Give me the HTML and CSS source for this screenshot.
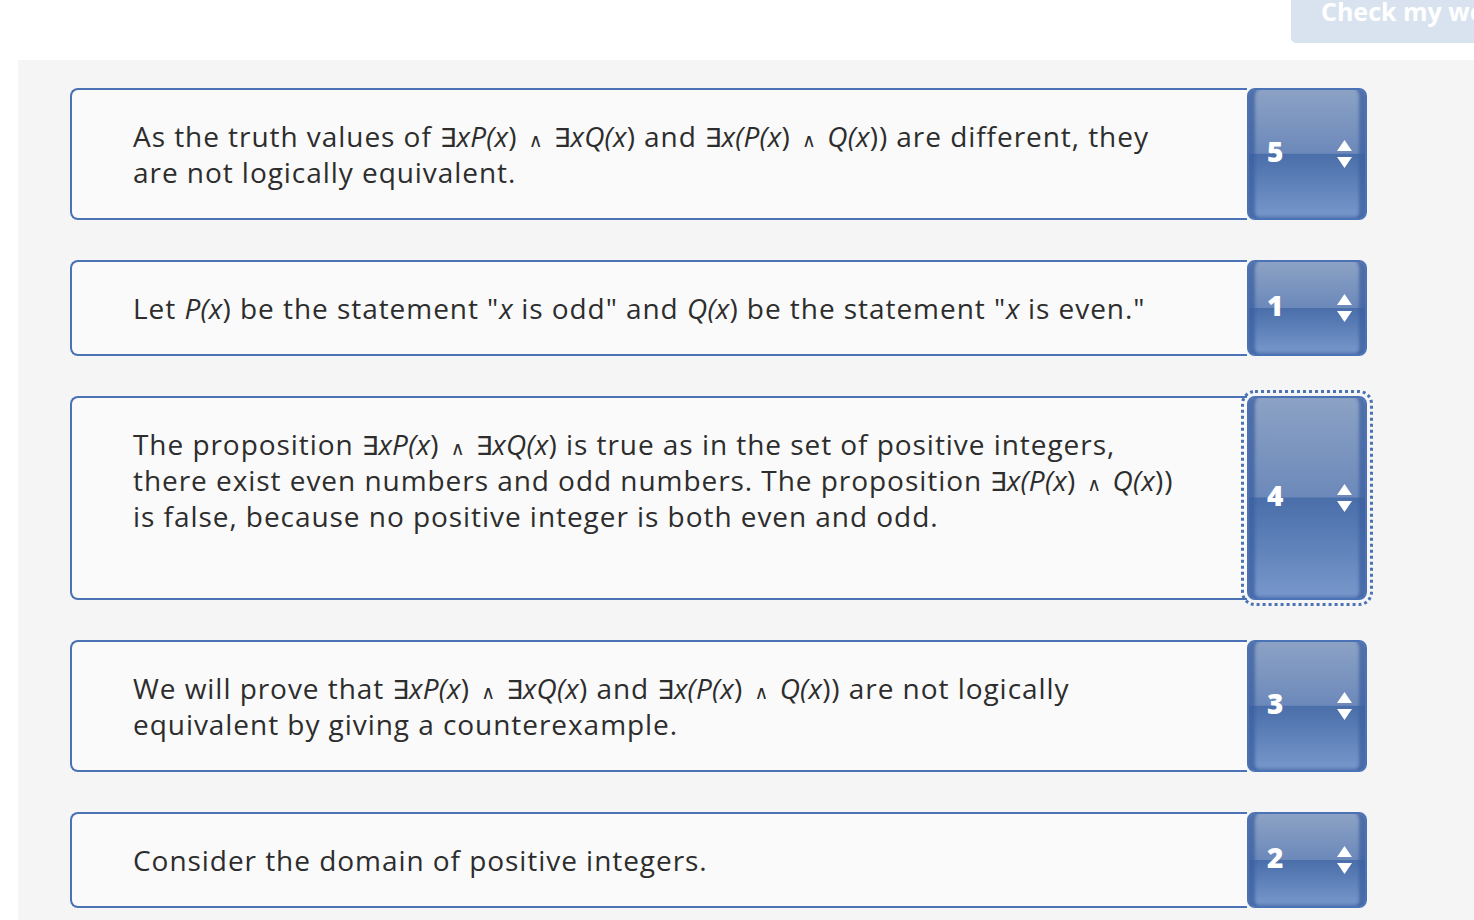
FILE: index.html
```html
<!DOCTYPE html>
<html lang="en">
<head>
    <meta charset="UTF-8">
    <meta name="viewport" content="width=device-width, initial-scale=1.0">
    <title>Ordering</title>
    <link rel="stylesheet" href="styles.css">
</head>
<body>
    <!-- Top bar -->
    <header class="topbar">
        <button class="check-button">Check my work</button>
    </header>

    <main class="panel">
        <div class="card">
            <div class="card-text">
                As the truth values of <span class="q">∃</span><i>xP(x</i>) <span class="op">∧</span> <span class="q">∃</span><i>xQ(x</i>) and <span class="q">∃</span><i>x(P(x</i>) <span class="op">∧</span> <i>Q(x</i>)) are different, they<br>are not logically equivalent.
            </div>
            <div class="order-select"><span class="order-num">5</span><svg class="arrows" width="15" height="28" viewBox="0 0 15 28"><polygon points="7.5,0 15,11 0,11"/><polygon points="0,17 15,17 7.5,28"/></svg></div>
        </div>

        <div class="card">
            <div class="card-text">
                Let <i>P(x</i>) be the statement "<i>x</i> is odd" and <i>Q(x</i>) be the statement "<i>x</i> is even."
            </div>
            <div class="order-select"><span class="order-num">1</span><svg class="arrows" width="15" height="28" viewBox="0 0 15 28"><polygon points="7.5,0 15,11 0,11"/><polygon points="0,17 15,17 7.5,28"/></svg></div>
        </div>

        <div class="card">
            <div class="card-text card-text-tall">
                The proposition <span class="q">∃</span><i>xP(x</i>) <span class="op">∧</span> <span class="q">∃</span><i>xQ(x</i>) is true as in the set of positive integers,<br>there exist even numbers and odd numbers. The proposition <span class="q">∃</span><i>x(P(x</i>) <span class="op">∧</span> <i>Q(x</i>))<br>is false, because no positive integer is both even and odd.
            </div>
            <div class="order-select focused"><span class="order-num">4</span><svg class="arrows" width="15" height="28" viewBox="0 0 15 28"><polygon points="7.5,0 15,11 0,11"/><polygon points="0,17 15,17 7.5,28"/></svg></div>
        </div>

        <div class="card">
            <div class="card-text">
                We will prove that <span class="q">∃</span><i>xP(x</i>) <span class="op">∧</span> <span class="q">∃</span><i>xQ(x</i>) and <span class="q">∃</span><i>x(P(x</i>) <span class="op">∧</span> <i>Q(x</i>)) are not logically<br>equivalent by giving a counterexample.
            </div>
            <div class="order-select"><span class="order-num">3</span><svg class="arrows" width="15" height="28" viewBox="0 0 15 28"><polygon points="7.5,0 15,11 0,11"/><polygon points="0,17 15,17 7.5,28"/></svg></div>
        </div>

        <div class="card">
            <div class="card-text">
                Consider the domain of positive integers.
            </div>
            <div class="order-select"><span class="order-num">2</span><svg class="arrows" width="15" height="28" viewBox="0 0 15 28"><polygon points="7.5,0 15,11 0,11"/><polygon points="0,17 15,17 7.5,28"/></svg></div>
        </div>
    </main>
</body>
</html>
```

FILE: styles.css
```css
/* Page */
body {
    margin: 0;
    overflow: hidden;
    background-color: #fff;
    font-family: 'Open Sans', 'Liberation Sans', 'DejaVu Sans', sans-serif;
    color: #2d2d2d;
}

/* Top bar */
.topbar {
    height: 60px;
    display: flex;
    justify-content: flex-end;
    align-items: flex-start;
    overflow: hidden;
}

.check-button {
    width: 260px;
    margin-top: -12px;
    margin-right: -77px;
    padding: 5px 30px 14px;
    text-align: left;
    background-color: #d9e3ef;
    color: #fff;
    border: none;
    border-radius: 5px;
    font-family: 'Open Sans', 'Liberation Sans', sans-serif;
    font-size: 25px;
    font-weight: 700;
    line-height: 36px;
    white-space: nowrap;
}

/* Grey panel */
.panel {
    margin-left: 18px;
    min-height: 900px;
    padding: 28px 107px 0 52px;
    background-color: #f5f5f5;
    display: flex;
    flex-direction: column;
    gap: 40px;
}

/* Cards */
.card {
    display: flex;
}

.card-text {
    flex: 1;
    padding: 28px 20px 28px 61px;
    background-color: #fafafa;
    border: 2px solid #4a72b5;
    border-right: none;
    border-radius: 8px 0 0 8px;
    font-size: 28px;
    line-height: 36px;
    letter-spacing: 0.95px;
    white-space: nowrap;
}

.card-text-tall {
    padding-bottom: 64px;
}

.card-text i {
    font-style: italic;
    letter-spacing: 0.3px;
}

.q {
    font-family: 'DejaVu Sans', sans-serif;
    font-size: 26px;
    line-height: 20px;
    letter-spacing: 0;
}

.op {
    font-family: 'DejaVu Sans', sans-serif;
    font-size: 19px;
    line-height: 20px;
    letter-spacing: 0;
    padding: 0 3px;
}

/* Number selector */
.order-select {
    width: 120px;
    flex-shrink: 0;
    box-sizing: border-box;
    display: flex;
    align-items: center;
    justify-content: space-between;
    padding: 0 13px 0 18px;
    border: 2px solid #4a72b5;
    border-radius: 8px;
    background: linear-gradient(to bottom, #8ca2c5 0%, #6c89ba 49.5%, #4a6ea9 50%, #5d80b9 72%, #7898cb 100%);
    box-shadow: inset 10px 0 3px -4px rgba(60, 95, 160, 0.75),
                inset -10px 0 3px -4px rgba(60, 95, 160, 0.75),
                inset 0 -5px 3px -3px rgba(70, 105, 170, 0.6);
    color: #fff;
}

.order-select.focused {
    outline: 3px dotted #4a72b5;
    outline-offset: 3px;
}

.order-num {
    margin-bottom: 7px;
    font-size: 28px;
    font-weight: 800;
    line-height: 1;
}

.arrows {
    fill: #fff;
    display: block;
}
```
